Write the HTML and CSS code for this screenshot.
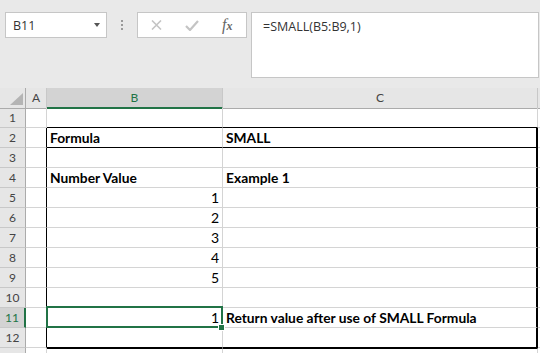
FILE: index.html
```html
<!DOCTYPE html>
<html lang="en">
<head>
  <meta charset="UTF-8">
  <title>SMALL Formula</title>
  <link rel="stylesheet" href="styles.css">
</head>
<body>
  <!-- formula bar -->
  <div class="toolbar">
    <div class="namebox">
      <span>B11</span>
      <span class="caret"></span>
    </div>
    <div class="grip"><i></i><i></i><i></i></div>
    <div class="fbtns">
      <span class="fbtn">
        <svg width="11" height="10" viewBox="0 0 11 10"><path d="M1 0.5L10 9.5M10 0.5L1 9.5" stroke="#c4c4c4" stroke-width="1.6" fill="none"/></svg>
      </span>
      <span class="fbtn">
        <svg width="14" height="11" viewBox="0 0 14 11"><path d="M1 6L5 10L13 1" stroke="#c4c4c4" stroke-width="2.2" fill="none"/></svg>
      </span>
      <span class="fbtn fx">f<small>x</small></span>
    </div>
    <div class="formula">=SMALL(B5:B9,1)</div>
  </div>

  <!-- sheet -->
  <div class="sheet">
    <div class="row head">
      <div class="corner"><span class="tri"></span></div>
      <div class="hd">A</div>
      <div class="hd on">B</div>
      <div class="hd">C</div>
      <div class="hd last"></div>
    </div>
    <div class="row">
      <div class="rh">1</div>
      <div class="c"></div>
      <div class="c blk-b"></div>
      <div class="c blk-b"></div>
      <div class="c last"></div>
    </div>
    <div class="row">
      <div class="rh">2</div>
      <div class="c blk-r"></div>
      <div class="c b blk-b">Formula</div>
      <div class="c b blk-b thk-r">SMALL</div>
      <div class="c last"></div>
    </div>
    <div class="row">
      <div class="rh">3</div>
      <div class="c blk-r"></div>
      <div class="c"></div>
      <div class="c thk-r"></div>
      <div class="c last"></div>
    </div>
    <div class="row">
      <div class="rh">4</div>
      <div class="c blk-r"></div>
      <div class="c b">Number Value</div>
      <div class="c b thk-r">Example 1</div>
      <div class="c last"></div>
    </div>
    <div class="row">
      <div class="rh">5</div>
      <div class="c blk-r"></div>
      <div class="c num">1</div>
      <div class="c thk-r"></div>
      <div class="c last"></div>
    </div>
    <div class="row">
      <div class="rh">6</div>
      <div class="c blk-r"></div>
      <div class="c num">2</div>
      <div class="c thk-r"></div>
      <div class="c last"></div>
    </div>
    <div class="row">
      <div class="rh">7</div>
      <div class="c blk-r"></div>
      <div class="c num">3</div>
      <div class="c thk-r"></div>
      <div class="c last"></div>
    </div>
    <div class="row">
      <div class="rh">8</div>
      <div class="c blk-r"></div>
      <div class="c num">4</div>
      <div class="c thk-r"></div>
      <div class="c last"></div>
    </div>
    <div class="row">
      <div class="rh">9</div>
      <div class="c blk-r"></div>
      <div class="c num">5</div>
      <div class="c thk-r"></div>
      <div class="c last"></div>
    </div>
    <div class="row">
      <div class="rh">10</div>
      <div class="c blk-r"></div>
      <div class="c"></div>
      <div class="c thk-r"></div>
      <div class="c last"></div>
    </div>
    <div class="row">
      <div class="rh on">11</div>
      <div class="c blk-r"></div>
      <div class="c num cur">1</div>
      <div class="c b thk-r">Return value after use of SMALL Formula</div>
      <div class="c last"></div>
    </div>
    <div class="row">
      <div class="rh">12</div>
      <div class="c blk-r"></div>
      <div class="c blk-b"></div>
      <div class="c blk-b thk-r"></div>
      <div class="c last"></div>
    </div>
    <div class="row">
      <div class="rh"></div>
      <div class="c"></div>
      <div class="c blk-t"></div>
      <div class="c blk-t"></div>
      <div class="c last"></div>
    </div>
  </div>
</body>
</html>
```

FILE: styles.css
```css
body {
  margin: 0;
  width: 540px;
  height: 353px;
  overflow: hidden;
  background: #fff;
  font-family: "Open Sans", sans-serif;
}

/* formula bar */
.toolbar {
  display: flex;
  align-items: flex-start;
  height: 88px;
  box-sizing: border-box;
  padding: 12px 0 0 5px;
  background: #e9e9e9;
}
.namebox {
  display: flex;
  align-items: center;
  justify-content: space-between;
  width: 102px;
  height: 26px;
  box-sizing: border-box;
  padding: 0 6px 0 7px;
  background: #fff;
  border: 1px solid #c6c6c6;
  font-size: 12.5px;
  color: #333;
}
.caret {
  width: 0;
  height: 0;
  border-left: 3px solid transparent;
  border-right: 3px solid transparent;
  border-top: 4px solid #555;
}
.grip {
  display: flex;
  flex-direction: column;
  align-items: center;
  gap: 2px;
  width: 30px;
  padding-top: 8px;
}
.grip i {
  width: 2px;
  height: 2px;
  background: #9a9a9a;
}
.fbtns {
  display: flex;
  width: 110px;
  height: 26px;
  box-sizing: border-box;
  padding: 0 1px;
  background: #fff;
  border: 1px solid #c6c6c6;
}
.fbtn {
  display: flex;
  align-items: center;
  justify-content: center;
  width: 36px;
}
.fx {
  font-family: "Liberation Serif", serif;
  font-style: italic;
  font-size: 16px;
  color: #666;
}
.fx small {
  font-size: 12px;
  font-weight: bold;
  padding-top: 3px;
}
.formula {
  width: 288px;
  height: 66px;
  box-sizing: border-box;
  margin-left: 4px;
  padding: 5px 11px;
  line-height: 18px;
  background: #fff;
  border: 1px solid #c6c6c6;
  font-size: 12.5px;
  color: #333;
}

/* sheet */
.row {
  display: grid;
  grid-template-columns: 26px 21px 176px 315px 2px;
  height: 20px;
}
.row > div {
  box-sizing: border-box;
  white-space: nowrap;
}
.corner, .hd, .rh {
  background: #e6e6e6;
  font-family: Lato, sans-serif;
  font-size: 12px;
  line-height: 19px;
  color: #444;
  text-align: center;
}
.corner {
  position: relative;
  border-right: 1px solid #ababab;
  border-bottom: 1px solid #ababab;
}
.tri {
  position: absolute;
  right: 2px;
  bottom: 3px;
  width: 0;
  height: 0;
  border-left: 13px solid transparent;
  border-bottom: 12px solid #b4b4b4;
}
.hd {
  border-right: 1px solid #c8c8c8;
  border-bottom: 1px solid #ababab;
}
.hd.last {
  border-right: none;
}
.hd.on {
  background: #d3d3d3;
  color: #217346;
  border-bottom: 2px solid #217346;
}
.rh {
  border-right: 1px solid #ababab;
  border-bottom: 1px solid #c8c8c8;
}
.rh.on {
  background: #d3d3d3;
  color: #217346;
  border-right: 2px solid #217346;
}
.c {
  padding: 0 3px;
  border-right: 1px solid #d4d4d4;
  border-bottom: 1px solid #d4d4d4;
  font-family: Lato, sans-serif;
  font-size: 14px;
  line-height: 19px;
  color: #000;
}
.c.last {
  border-right: none;
}
.b {
  font-weight: bold;
  font-size: 13.8px;
}
.num {
  text-align: right;
}
.blk-b {
  border-bottom-color: #000;
}
.blk-r {
  border-right-color: #000;
}
.blk-t {
  border-top: 1px solid #000;
}
.thk-r {
  border-right: 2px solid #000;
}

/* active cell */
.cur {
  position: relative;
}
.cur::after {
  content: "";
  position: absolute;
  top: -2px;
  left: -1px;
  right: -1px;
  bottom: -1px;
  border: 2px solid #217346;
}
.cur::before {
  content: "";
  position: absolute;
  right: -3px;
  bottom: -4px;
  width: 5px;
  height: 5px;
  background: #217346;
  border: 1px solid #fff;
  z-index: 1;
}
```
